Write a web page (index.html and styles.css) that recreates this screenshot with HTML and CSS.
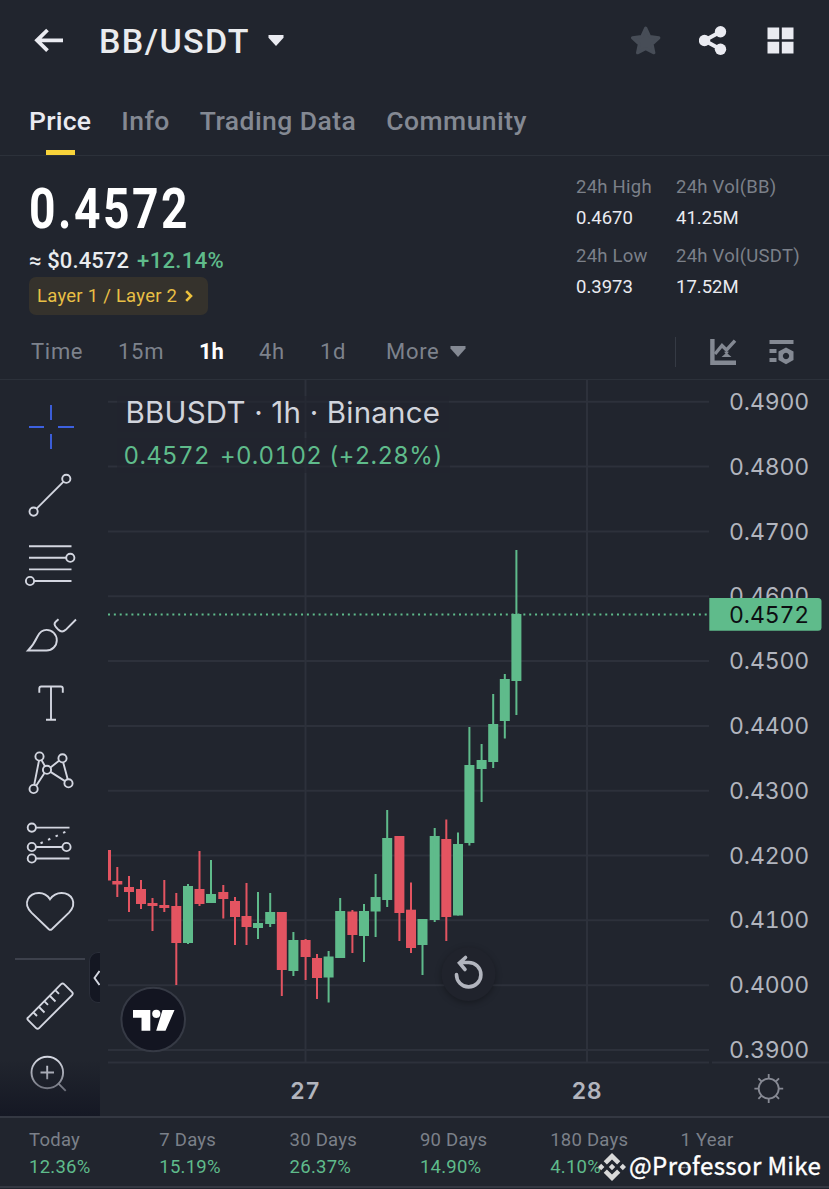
FILE: index.html
```
<!DOCTYPE html>
<html lang="en">
<head>
  <meta charset="UTF-8" />
  <meta name="viewport" content="width=device-width, initial-scale=1.0"/>
  <title>BB/USDT</title>
  <link rel="stylesheet" href="styles.css">
</head>
<body>
  <header>
    <svg class="back" width="30" height="26" viewBox="34 27.5 30 26"><path d="M63 39.8H37M47.5 29.5L37 39.8l10.5 10.4"/></svg>
    <h1>BB/USDT</h1>
    <svg class="caret" width="16" height="12" viewBox="0 0.5 16 12"><path d="M.5 0h15v3.2L8 11.5.5 3.2z"/></svg>
    <div class="actions">
      <svg width="30" height="30" viewBox="631 26 30 30"><path class="star" d="M645.7 28l4 8.6 9.2 1.2-6.8 6.3 1.8 8.7-8.2-4.2-8.2 4.2 1.8-8.7-6.8-6.3 9.2-1.2z"/></svg>
      <svg width="30" height="30" viewBox="699 26 30 30"><path class="share-line" d="M720.5 31.7L704.5 40.5l16 8.8"/><circle cx="704.5" cy="40.5" r="5.7"/><circle cx="720.5" cy="31.7" r="5.7"/><circle cx="720.5" cy="49.3" r="5.7"/></svg>
      <svg width="27" height="30" viewBox="767.5 26 27 30"><path d="M768 27.5h11.7v11.7H768zM782.3 27.5H794v11.7h-11.7zM768 41.8h11.7v11.7H768zM782.3 41.8H794v11.7h-11.7z"/></svg>
    </div>
  </header>

  <nav class="tabs">
    <a class="active">Price</a>
    <a>Info</a>
    <a>Trading Data</a>
    <a>Community</a>
  </nav>

  <section class="summary">
    <div class="quote">
      <div class="last">0.4572</div>
      <div class="fiat"><span class="approx">≈ $0.4572</span><span class="up">+12.14%</span></div>
      <a class="chip">Layer 1 / Layer 2 <svg width="8" height="12" viewBox="0 0 8 12"><path d="M1.2 1.2L6 6l-4.8 4.8"/></svg></a>
    </div>
    <dl class="stats">
      <div><dt>24h High</dt><dd>0.4670</dd></div>
      <div><dt>24h Vol(BB)</dt><dd>41.25M</dd></div>
      <div><dt>24h Low</dt><dd>0.3973</dd></div>
      <div><dt>24h Vol(USDT)</dt><dd>17.52M</dd></div>
    </dl>
  </section>

  <div class="intervals">
    <span class="i-time">Time</span>
    <span class="i-15m">15m</span>
    <span class="i-1h active">1h</span>
    <span class="i-4h">4h</span>
    <span class="i-1d">1d</span>
    <span class="i-more">More</span>
    <svg class="caret" width="16" height="12" viewBox="0 0 16 12"><path d="M.5 0h15v2.4L8 11 .5 2.4z"/></svg>
    <div class="chart-actions">
      <svg width="28" height="28" viewBox="710 337 28 28"><path d="M710.2 338h4.4v21.6H736v4.4h-25.8z"/><path class="stroke" d="M715 353l7-8.5 4.5 4.5 8.5-9.3"/><path d="M721.5 356l4-3.5-1.5-1.7h5l-1.5 1.7 4 3.5z"/></svg>
      <svg width="26" height="28" viewBox="768.5 337 26 28"><path d="M769 339h24v4h-24zM769 348h7v4h-7zM769 357h7v4h-7z"/><path fill-rule="evenodd" d="M785.5 346.5l7.5 4v8.5l-7.5 4.3-7.5-4.3v-8.5zM785.5 351.8a3.2 3.2 0 1 0 .01 0z"/></svg>
    </div>
  </div>

  <main>
    <aside class="tools">
      <svg viewBox="0 392 100 69"><path class="cross" d="M51 405v15M51 434v15M29 427h15M58 427h16"/></svg>
      <svg viewBox="0 461 100 69"><path d="M36.6 508.6l26.7-26.8"/><circle cx="66.3" cy="478.8" r="4.1"/><circle cx="33.6" cy="511.6" r="4.1"/></svg>
      <svg viewBox="0 530 100 69"><path d="M29 546.3h42.5M29 557.8h37M29 569.4h42.5M34 581h37.5"/><circle cx="70.3" cy="557.8" r="4.1"/><circle cx="30" cy="581" r="4.1"/></svg>
      <svg viewBox="0 599 100 69"><path d="M28 650.5h18.5a10.2 10.2 0 0 0 0-20.6c-4.5 0-7 2.5-9 6.6-2.7 5.7-5 9.5-9.5 14zM76 619.5l-10.3 10.3q-3.7 3.4-7.2 0l-2.3-2.5q-3-3.3-.5-5.6l2.8-2.5"/></svg>
      <svg viewBox="0 668 100 69"><path d="M39.3 692.8v-4.3q0-2 2-2h19.5q2 0 2 2v4.3M51 686.5v33M46 719.7h10"/></svg>
      <svg viewBox="0 737 100 69"><path d="M39 760.6l-4.8 24.3M41.5 760l3.5 6.3M36.2 785.8l8.3-12.7M50.5 767.5l8.5-6.8M50.5 771.9l14.5 9.2M63.2 762.4l4.5 16.8"/><circle cx="39.5" cy="756.5" r="4.1"/><circle cx="62.5" cy="758.3" r="4.1"/><circle cx="47" cy="769.8" r="4.1"/><circle cx="33.6" cy="789" r="4.1"/><circle cx="68.5" cy="783.3" r="4.1"/></svg>
      <svg viewBox="0 806 100 69"><path d="M36 827.6h33.5M36 847h26.4M36 858.5h33.5"/><path class="dots" d="M40.5 843.3l26-12"/><circle cx="31.8" cy="827.6" r="4.1"/><circle cx="31.8" cy="847" r="4.1"/><circle cx="66.5" cy="847" r="4.1"/><circle cx="31.8" cy="858.5" r="4.1"/></svg>
      <svg viewBox="0 875 100 69"><path d="M48.8 929.2L31.5 912.6C22 903 29 893 39 893q7 0 11 6.2Q54.5 893 61.5 893C71.5 893 78 903 69 912.6L51.8 929.2q-1.5 1.2-3 0z"/></svg>
      <hr>
      <svg viewBox="0 972 100 69"><path d="M28.1 1017.6l33-33.5q1.5-1.3 3 0l8 8q1.3 1.4 0 3l-33 33q-1.5 1.5-3 0l-8-8q-1.5-1.5 0-2.5zM33.5 1012.5l3.5 3.5M39 1007l5.5 5.5M44.5 1001.4l3.5 3.5M50 996l5.5 5.5M55.5 990.4l3.5 3.5"/></svg>
      <svg viewBox="0 1041 100 69"><circle cx="47.3" cy="1072.5" r="15.8"/><path d="M40.5 1072.5h13.5M47.2 1065.7v13.5M58.5 1083.7l7.2 7.2"/></svg>
      <div class="fade"></div>
      <div class="handle"><svg width="7" height="16" viewBox="0 0 7 16"><path d="M6.5 1L1.5 8l5 7"/></svg></div>
    </aside>

    <svg class="chart" width="729" height="736" viewBox="100 380 729 736">
      <g id="grid"></g>
      <path class="grid" d="M305.5 380v682M587 380v682M108 1062.5h601M712 1062.5h117"/>
      <rect class="legend-bg" x="117" y="396" width="332" height="36"/>
      <rect class="legend-bg" x="117" y="438" width="333" height="35"/>
      <path class="last-line" d="M108 614.5h601"/>
      <g id="candles"></g>
      <g id="prices"></g>
      <path class="tag" d="M709.3 598H818q3.5 0 3.5 3.5v25.7q0 3.5-3.5 3.5H709.3z"/>
      <text class="price current" x="729" y="622.6">0.4572</text>
      <text class="day" x="290" y="1098.5">27</text>
      <text class="day" x="571.5" y="1098.5">28</text>
      <text class="symbol" x="125.5" y="423">BBUSDT · 1h · Binance</text>
      <text class="change" x="123.5" y="464">0.4572</text>
      <text class="change" x="220" y="464">+0.0102 (+2.28%)</text>

      <circle class="reset" cx="468.5" cy="974" r="27"/>
      <path class="reset-icon" d="M456.5 974.5a12.2 12.2 0 1 0 12.2-12h-8.5M465.5 957.5l-6 5.5 5.5 6.5"/>

      <circle class="tv" cx="153.2" cy="1019.5" r="31.8"/>
      <path class="tv-mark" d="M133 1010h17.3v20.7h-8.8v-13H133zM162.5 1010h12l-9 20.7h-9.3z"/>
      <circle class="tv-mark" cx="156.3" cy="1013.8" r="4.1"/>

      <g class="gear"><circle cx="768.7" cy="1088.6" r="10"/><path d="M768.7 1078.6v-4.5M768.7 1098.6v4.3M758.7 1088.6h-4.3M778.7 1088.6h4.5M761.6 1081.5l-3.2-3.2M775.8 1081.5l3.2-3.2M761.6 1095.7l-3.2 3.2M775.8 1095.7l3.2 3.2"/></g>
    </svg>
  </main>

  <footer>
    <div><span>Today</span><b>12.36%</b></div>
    <div><span>7 Days</span><b>15.19%</b></div>
    <div><span>30 Days</span><b>26.37%</b></div>
    <div><span>90 Days</span><b>14.90%</b></div>
    <div><span>180 Days</span><b>4.10%</b></div>
    <div><span>1 Year</span><b class="none">--</b></div>
    <div class="author">
      <svg width="28" height="28" viewBox="0 0 28 28"><path d="M14 0l8.3 8.3-3.2 3.2L14 6.4l-5.1 5.1-3.2-3.2zM14 28l8.3-8.3-3.2-3.2-5.1 5.1-5.1-5.1-3.2 3.2zM3.2 10.8L6.4 14l-3.2 3.2L0 14zM14 10.8l3.2 3.2-3.2 3.2-3.2-3.2zM24.8 10.8L28 14l-3.2 3.2-3.2-3.2z"/></svg>
      <span>@Professor Mike</span>
    </div>
  </footer>

  <script>
    // x, body top, body bottom, wick top, wick bottom, direction
    const candles = [
      [117.3, 881, 884.5, 867, 897, 'down'],
      [129, 887, 892, 876, 912, 'down'],
      [141, 889, 904, 880, 909, 'down'],
      [152.5, 903, 906, 898, 931, 'down'],
      [164.3, 905, 908, 880, 912, 'down'],
      [176.3, 906, 943, 893, 985, 'down'],
      [188, 886, 943, 884, 944, 'up'],
      [199.5, 889, 904, 851, 906, 'down'],
      [211, 894, 903, 860, 903, 'up'],
      [223.3, 892, 899, 885, 918.5, 'down'],
      [235, 901, 917, 897, 945, 'down'],
      [246.5, 916, 927, 883, 945, 'down'],
      [258, 923, 928, 892, 939, 'up'],
      [270.2, 912, 924, 893, 927, 'up'],
      [281.8, 912, 970, 912, 996, 'down'],
      [293.4, 940, 971, 932, 976, 'up'],
      [305.6, 940, 957, 939, 980, 'down'],
      [317, 958, 978, 954, 999, 'down'],
      [328.6, 956.5, 977.5, 951, 1002.5, 'up'],
      [340.2, 911, 958, 898, 958, 'up'],
      [352.4, 911.5, 935, 910, 953, 'down'],
      [364, 911, 936, 904, 962, 'up'],
      [375.6, 897, 911.5, 874, 937, 'up'],
      [387.2, 838, 900, 810, 907, 'up'],
      [399.4, 836, 913, 836, 941, 'down'],
      [411, 909.7, 948, 882.5, 953, 'down'],
      [422.5, 919, 945, 919, 975, 'up'],
      [434.7, 836, 920, 828, 922, 'up'],
      [446.3, 839, 917, 819.5, 941, 'down'],
      [458, 844, 915.5, 832.5, 915.5, 'up'],
      [469.4, 765, 843, 727, 845.5, 'up'],
      [481.6, 760, 769, 744, 802, 'up'],
      [493.2, 724, 762, 694, 768, 'up'],
      [504.8, 679, 721, 674, 738.5, 'up'],
      [516.4, 614, 681, 550, 715, 'up']
    ];

    // first candle is cut by the left edge of the plot
    let bars = '<rect class="down" x="108" y="850" width="3" height="30.5"/>';
    candles.forEach(([x, top, bottom, high, low, dir]) => {
      bars += `<rect class="${dir}" x="${x - 5}" y="${top}" width="10" height="${bottom - top}"/>`;
      bars += `<rect class="${dir}" x="${x - 1}" y="${high}" width="2" height="${low - high}"/>`;
    });
    document.getElementById('candles').innerHTML = bars;

    let lines = '';
    let labels = '';
    for (let i = 0; i <= 10; i++) {
      const y = 401.8 + i * 64.82;
      lines += `<path class="grid" d="M108 ${y}h601"/>`;
      labels += `<text class="price" x="729" y="${y + 8.1}">${(0.49 - i * 0.01).toFixed(4)}</text>`;
    }
    document.getElementById('grid').innerHTML = lines;
    document.getElementById('prices').innerHTML = labels;
  </script>
</body>
</html>
```
FILE: styles.css
```
body {
  margin: 0;
  background: #21252e;
  color: #eaecef;
  font-family: Roboto, "Liberation Sans", sans-serif;
  height: 1189px;
  overflow: hidden;
}
svg {
  display: block;
  flex: none;
}
header {
  display: flex;
  align-items: center;
  height: 82px;
  padding: 0 35px 0 34px;
}
.back {
  fill: none;
  stroke: #eaebf1;
  stroke-width: 3.8;
}
h1 {
  margin: 0 19px 0 35px;
  font-size: 34px;
  font-weight: 500;
  letter-spacing: 1.4px;
  line-height: 82px;
  width: 150px;
  white-space: nowrap;
}
.caret {
  fill: #eaebf1;
}
.actions {
  display: flex;
  gap: 38px;
  margin-left: auto;
  fill: #eaebf1;
}
.star {
  fill: #474d57;
  stroke: #474d57;
  stroke-width: 3;
  stroke-linejoin: round;
}
.share-line {
  fill: none;
  stroke: #eaebf1;
  stroke-width: 4;
}
.tabs {
  display: flex;
  gap: 30px;
  height: 73px;
  padding-left: 29px;
  border-bottom: 1px solid #2c313a;
}
.tabs a {
  position: relative;
  line-height: 77px;
  font-size: 26.5px;
  font-weight: 500;
  letter-spacing: 0.45px;
  color: #848993;
}
.tabs a.active {
  letter-spacing: 0.25px;
  color: #eaebf1;
}
.tabs a.active::after {
  content: "";
  position: absolute;
  bottom: 0;
  left: 17px;
  width: 29px;
  height: 5px;
  background: #f8d33a;
}
.summary {
  display: flex;
  justify-content: space-between;
  height: 169px;
  padding-left: 29px;
}
.last {
  width: 190px;
  padding-top: 23px;
  font-size: 55px;
  font-weight: 700;
  line-height: 61px;
  letter-spacing: 3px;
  color: #fff;
  transform: scaleX(0.84);
  transform-origin: left;
}
.fiat {
  display: flex;
  gap: 8px;
  padding-top: 4px;
  font-size: 22px;
  font-weight: 500;
  line-height: 33px;
  letter-spacing: 0.1px;
}
.up {
  letter-spacing: 0.35px;
  color: #5fbb8b;
}
.chip {
  display: flex;
  align-items: center;
  gap: 8px;
  box-sizing: border-box;
  width: 179px;
  height: 38px;
  padding-left: 8px;
  border-radius: 7px;
  background: #35322c;
  color: #e8bf45;
  font-size: 18.5px;
  letter-spacing: 0.25px;
  white-space: nowrap;
}
.chip svg {
  fill: none;
  stroke: #eec23c;
  stroke-width: 2.6;
}
.stats {
  display: grid;
  grid-template-columns: 100px 153px;
  row-gap: 7px;
  align-content: start;
  margin: 0;
  padding-top: 16px;
  font-size: 18.5px;
  line-height: 31px;
}
.stats dt {
  letter-spacing: 0.25px;
  color: #7b8089;
}
.stats dd {
  margin: 0;
  color: #eaebf1;
}
.intervals {
  display: flex;
  align-items: center;
  box-sizing: border-box;
  height: 55px;
  padding: 0 34px 1px 31px;
  border-bottom: 1px solid #2c313a;
  color: #7d828c;
  font-size: 22px;
  letter-spacing: 0.7px;
}
.intervals .active {
  color: #fff;
  font-weight: 700;
  letter-spacing: 0;
}
.i-time {
  width: 87px;
}
.i-15m {
  width: 81px;
}
.i-1h {
  width: 60px;
}
.i-4h {
  width: 61px;
}
.i-1d {
  width: 66px;
}
.i-more {
  width: 64px;
}
.intervals .caret {
  fill: #848993;
}
.chart-actions {
  display: flex;
  align-items: center;
  gap: 31px;
  height: 30px;
  margin-left: auto;
  padding-left: 34px;
  border-left: 1px solid #353a44;
  fill: #848993;
}
.chart-actions .stroke {
  fill: none;
  stroke: #848993;
  stroke-width: 3.4;
}
main {
  display: flex;
  height: 736px;
  border-bottom: 2px solid #343842;
}
.tools {
  position: relative;
  display: flex;
  flex-direction: column;
  box-sizing: border-box;
  width: 100px;
  padding-top: 12px;
  fill: none;
  stroke: #d3d6e0;
  stroke-width: 1.9;
}
.tools > svg {
  width: 100px;
  height: 69px;
}
.tools hr {
  box-sizing: border-box;
  width: 70px;
  height: 2px;
  margin: 14px 0 12px 15px;
  border: none;
  background: #3d414c;
}
.cross {
  stroke: #3d61e0;
}
.dots {
  stroke-width: 2;
  stroke-dasharray: 2.5 5.8;
}
.fade {
  position: absolute;
  bottom: 0;
  width: 100px;
  height: 56px;
  background: linear-gradient(rgba(19, 21, 33, 0), #151824);
}
.handle {
  position: absolute;
  top: 572px;
  right: 0;
  display: flex;
  align-items: center;
  justify-content: flex-end;
  box-sizing: border-box;
  width: 11px;
  height: 51px;
  border: 1px solid #2a2e39;
  border-right: none;
  border-radius: 9px 0 0 9px;
  background: #141722;
}
.grid {
  fill: none;
  stroke: #2d313b;
  stroke-width: 2;
}
.legend-bg {
  fill: #21252e;
  opacity: 0.6;
}
.last-line {
  stroke: #5fbb8b;
  stroke-width: 2;
  stroke-dasharray: 2 3.85;
}
#candles .up {
  fill: #5fbb8b;
}
#candles .down {
  fill: #e35461;
}
.tag {
  fill: #5fbb8b;
}
.chart text {
  font-family: Inter, "Liberation Sans", sans-serif;
  font-variant-numeric: tabular-nums;
}
.price {
  font-size: 23px;
  letter-spacing: -0.1px;
  fill: #b2b5be;
}
.price.current {
  fill: #0c0e12;
}
.day {
  font-size: 23px;
  font-weight: 600;
  letter-spacing: 0.4px;
  fill: #b2b5be;
}
.chart .symbol {
  font-size: 29.5px;
  font-variant-numeric: normal;
  letter-spacing: 0.2px;
  fill: #d1d4dc;
}
.change {
  font-size: 24px;
  letter-spacing: 0.35px;
  fill: #5fbb8b;
}
.reset {
  fill: #20232c;
  filter: drop-shadow(0 2px 3px rgba(0, 0, 0, 0.3));
}
.reset-icon {
  fill: none;
  stroke: #b2b5be;
  stroke-width: 3.6;
  stroke-linecap: round;
}
.tv {
  fill: #131521;
  stroke: #363a45;
  stroke-width: 2;
}
.tv-mark {
  fill: #fff;
}
.gear {
  fill: none;
  stroke: #868993;
  stroke-width: 1.8;
}
footer {
  position: relative;
  display: grid;
  grid-template-columns: repeat(6, 130.3px);
  height: 68px;
  padding-left: 29px;
  border-bottom: 2px solid #343842;
  font-size: 18.5px;
  letter-spacing: 0.25px;
}
footer span,
footer b {
  display: block;
  line-height: 27px;
  white-space: nowrap;
}
footer span {
  padding-top: 9px;
  color: #7b8089;
}
footer b {
  font-weight: 400;
  color: #5fbb8b;
}
footer .none {
  color: #747982;
}
.author {
  position: absolute;
  left: 598px;
  top: 33px;
  display: flex;
  align-items: center;
  gap: 3px;
  fill: #d9d9d9;
}
.author span {
  padding: 0 0 5px;
  font-family: "Noto Sans CJK SC", sans-serif;
  font-size: 24px;
  font-weight: 400;
  letter-spacing: 0.4px;
  -webkit-text-stroke: 0.4px #fff;
  color: #fff;
}
```
